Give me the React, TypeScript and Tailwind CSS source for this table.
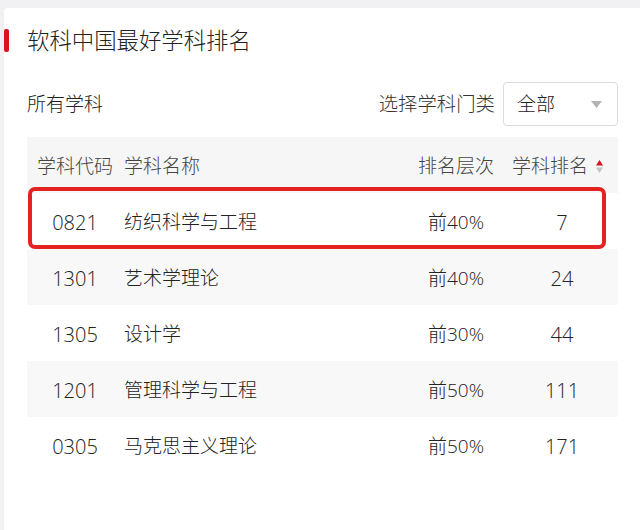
const rows = [
  { code: '0821', name: '纺织科学与工程', level: '前40%', rank: '7' },
  { code: '1301', name: '艺术学理论', level: '前40%', rank: '24' },
  { code: '1305', name: '设计学', level: '前30%', rank: '44' },
  { code: '1201', name: '管理科学与工程', level: '前50%', rank: '111' },
  { code: '0305', name: '马克思主义理论', level: '前50%', rank: '171' },
];

export default function App() {
  return (
    <div
      className="h-[530px] w-[640px] overflow-hidden bg-[#f1f1f3] pl-[4px] pt-[8px] font-light"
      style={{ fontFamily: '"Open Sans", "Noto Sans CJK SC", sans-serif' }}
    >
      <div className="h-[540px] w-[636px] rounded-tl-[4px] bg-white pt-[21px] pr-[22px]">
        {/* title */}
        <div className="flex items-center">
          <div className="h-[23px] w-[5px] rounded-[2px] bg-[#d8141c]" />
          <h1 className="ml-[18px] text-[22.4px] leading-[23px] text-[#222]">软科中国最好学科排名</h1>
        </div>

        {/* filter */}
        <div className="mt-[30px] ml-[23px] flex h-[44px] items-center justify-between">
          <span className="text-[19px] text-[#222]">所有学科</span>
          <div className="flex items-center">
            <span className="mr-[8px] text-[19.4px] text-[#333]">选择学科门类</span>
            <div className="flex h-[44px] w-[115px] items-center justify-between rounded-[4px] border border-[#dcdcdc] pl-[13px] pr-[15px]">
              <span className="text-[19px] text-[#222]">全部</span>
              <svg width="11" height="7" viewBox="0 0 11 7">
                <path d="M0 0h11L5.5 7z" fill="#b3b3b3" />
              </svg>
            </div>
          </div>
        </div>

        {/* table */}
        <div className="mt-[11px] ml-[23px] text-[19px]">
          <div className="flex h-[56px] items-center bg-[#f6f6f7] pt-[2px] text-[#444]">
            <div className="w-[96px] text-center">学科代码</div>
            <div className="flex-1 pl-[1px]">学科名称</div>
            <div className="w-[80px] text-center">排名层次</div>
            <div className="ml-[16px] flex w-[100px] items-center">
              <span>学科排名</span>
              <svg className="ml-[8px]" width="7" height="13" viewBox="0 0 7 13">
                <path d="M0 5.5h7L3.5 0z" fill="#d8141c" />
                <path d="M0 7.5h7L3.5 13z" fill="#c4c4c4" />
              </svg>
            </div>
            <div className="w-[6px]" />
          </div>

          {rows.map((r, i) => (
            <div
              key={r.code}
              className={`relative flex h-[56px] items-center pt-[3px] text-[#222] ${i % 2 === 1 ? 'bg-[#f8f8f9]' : 'bg-white'}`}
            >
              <div className="w-[96px] text-center text-[20px]">{r.code}</div>
              <div className="flex-1 pl-[1px]">{r.name}</div>
              <div className="w-[80px] text-center">{r.level}</div>
              <div className="ml-[16px] w-[100px] text-center text-[20px]">{r.rank}</div>
              <div className="w-[6px]" />
              {i === 0 && (
                <div className="pointer-events-none absolute top-[-6px] bottom-[0px] left-[1px] right-[12px] rounded-[7px] border-[4px] border-[#e52222]" />
              )}
            </div>
          ))}
        </div>
      </div>
    </div>
  );
}
